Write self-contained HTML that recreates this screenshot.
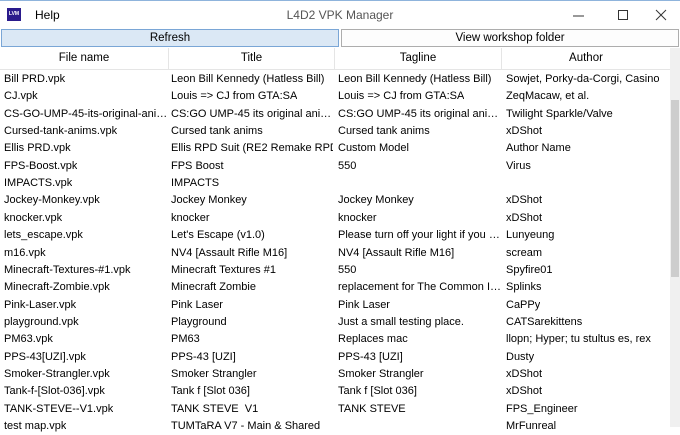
<!DOCTYPE html>
<html><head><meta charset="utf-8"><style>
*{margin:0;padding:0;box-sizing:border-box}
body{width:680px;height:427px;overflow:hidden;background:#fff;font-family:"Liberation Sans","Noto Sans CJK SC",sans-serif;font-size:11px;color:#000;position:relative}
.tb{position:absolute;left:0;top:0;width:680px;height:28px;background:#fff;border-top:1px solid #8fb4dc}
.logo{position:absolute;left:7px;top:7px;width:14px;height:13px;background:#2a1a8c;color:#fff;font-size:5px;font-weight:bold;line-height:13px;text-align:center}
.help{position:absolute;left:35px;top:7px;font-size:12px}
.title{position:absolute;left:0;width:680px;top:7px;text-align:center;color:#555;font-size:12px}
.btn{position:absolute;top:29px;height:18px;line-height:16px;text-align:center;font-size:11.5px;border:1px solid #adadad}
.hdr{position:absolute;top:48px;left:0;width:670px;height:22px;border-bottom:1px solid #e5e5e5;font-size:11.5px}
.hdr div{position:absolute;top:0;height:21px;line-height:21px;text-align:center;border-right:1px solid #e5e5e5}
.row{position:absolute;left:0;width:670px;height:17.35px;line-height:17px;white-space:nowrap}
.row span{position:absolute;top:0;overflow:hidden}
.sb{position:absolute;left:670px;top:48px;width:10px;height:379px;background:#f0f0f0}
.th{position:absolute;left:671px;top:100px;width:8px;height:177px;background:#cdcdcd}
</style></head><body>
<div class="tb">
<div class="logo">LVM</div>
<div class="help">Help</div>
<div class="title">L4D2 VPK Manager</div>
<svg style="position:absolute;left:570px;top:8px" width="100" height="14">
<line x1="3" y1="7" x2="14" y2="7" stroke="#333" stroke-width="1"/>
<rect x="48.5" y="1.5" width="9" height="9" fill="none" stroke="#333"/>
<line x1="86" y1="1" x2="96" y2="11" stroke="#333"/><line x1="96" y1="1" x2="86" y2="11" stroke="#333"/>
</svg>
</div>
<div class="btn" style="left:1px;width:338px;background:#dbe8f5;border-color:#7aa6d6">Refresh</div>
<div class="btn" style="left:341px;width:338px;background:#fdfdfd">View workshop folder</div>
<div class="hdr">
<div style="left:0;width:169px">File name</div>
<div style="left:169px;width:166px">Title</div>
<div style="left:335px;width:167px">Tagline</div>
<div style="left:502px;width:168px;border-right:none">Author</div>
</div>
<div class="sb"></div><div class="th"></div>
<div style="position:absolute;left:0;top:71px">
<div class="row" style="top:0"><span style="left:4px;width:162px">Bill PRD.vpk</span><span style="left:171px;width:162px">Leon Bill Kennedy (Hatless Bill)</span><span style="left:338px;width:162px">Leon Bill Kennedy (Hatless Bill)</span><span style="left:506px;width:162px">Sowjet, Porky-da-Corgi, Casino</span></div>
<div class="row" style="top:17.35px"><span style="left:4px">CJ.vpk</span><span style="left:171px">Louis =&gt; CJ from GTA:SA</span><span style="left:338px">Louis =&gt; CJ from GTA:SA</span><span style="left:506px">ZeqMacaw, et al.</span></div>
<div class="row" style="top:34.7px"><span style="left:4px;width:162px">CS-GO-UMP-45-its-original-ani…</span><span style="left:171px;width:162px">CS:GO UMP-45 its original ani…</span><span style="left:338px;width:162px">CS:GO UMP-45 its original ani…</span><span style="left:506px">Twilight Sparkle/Valve</span></div>
<div class="row" style="top:52.05px"><span style="left:4px">Cursed-tank-anims.vpk</span><span style="left:171px">Cursed tank anims</span><span style="left:338px">Cursed tank anims</span><span style="left:506px">xDShot</span></div>
<div class="row" style="top:69.4px"><span style="left:4px">Ellis PRD.vpk</span><span style="left:171px;width:162px">Ellis RPD Suit (RE2 Remake RPD…</span><span style="left:338px">Custom Model</span><span style="left:506px">Author Name</span></div>
<div class="row" style="top:86.75px"><span style="left:4px">FPS-Boost.vpk</span><span style="left:171px">FPS Boost</span><span style="left:338px">550</span><span style="left:506px">Virus</span></div>
<div class="row" style="top:104.1px"><span style="left:4px">IMPACTS.vpk</span><span style="left:171px">IMPACTS</span></div>
<div class="row" style="top:121.45px"><span style="left:4px">Jockey-Monkey.vpk</span><span style="left:171px">Jockey Monkey</span><span style="left:338px">Jockey Monkey</span><span style="left:506px">xDShot</span></div>
<div class="row" style="top:138.8px"><span style="left:4px">knocker.vpk</span><span style="left:171px">knocker</span><span style="left:338px">knocker</span><span style="left:506px">xDShot</span></div>
<div class="row" style="top:156.15px"><span style="left:4px">lets_escape.vpk</span><span style="left:171px">Let's Escape (v1.0)</span><span style="left:338px;width:162px">Please turn off your light if you …</span><span style="left:506px">Lunyeung</span></div>
<div class="row" style="top:173.5px"><span style="left:4px">m16.vpk</span><span style="left:171px">NV4 [Assault Rifle M16]</span><span style="left:338px">NV4 [Assault Rifle M16]</span><span style="left:506px">scream</span></div>
<div class="row" style="top:190.85px"><span style="left:4px">Minecraft-Textures-#1.vpk</span><span style="left:171px">Minecraft Textures #1</span><span style="left:338px">550</span><span style="left:506px">Spyfire01</span></div>
<div class="row" style="top:208.2px"><span style="left:4px">Minecraft-Zombie.vpk</span><span style="left:171px">Minecraft Zombie</span><span style="left:338px;width:162px">replacement for The Common I…</span><span style="left:506px">Splinks</span></div>
<div class="row" style="top:225.55px"><span style="left:4px">Pink-Laser.vpk</span><span style="left:171px">Pink Laser</span><span style="left:338px">Pink Laser</span><span style="left:506px">CaPPy</span></div>
<div class="row" style="top:242.9px"><span style="left:4px">playground.vpk</span><span style="left:171px">Playground</span><span style="left:338px">Just a small testing place.</span><span style="left:506px">CATSarekittens</span></div>
<div class="row" style="top:260.25px"><span style="left:4px">PM63.vpk</span><span style="left:171px">PM63</span><span style="left:338px">Replaces mac</span><span style="left:506px;width:162px">llopn; Hyper; tu stultus es, rex</span></div>
<div class="row" style="top:277.6px"><span style="left:4px">PPS-43[UZI].vpk</span><span style="left:171px">PPS-43 [UZI]</span><span style="left:338px">PPS-43 [UZI]</span><span style="left:506px">Dusty</span></div>
<div class="row" style="top:294.95px"><span style="left:4px">Smoker-Strangler.vpk</span><span style="left:171px">Smoker Strangler</span><span style="left:338px">Smoker Strangler</span><span style="left:506px">xDShot</span></div>
<div class="row" style="top:312.3px"><span style="left:4px">Tank-f-[Slot-036].vpk</span><span style="left:171px">Tank f [Slot 036]</span><span style="left:338px">Tank f [Slot 036]</span><span style="left:506px">xDShot</span></div>
<div class="row" style="top:329.65px"><span style="left:4px">TANK-STEVE--V1.vpk</span><span style="left:171px">TANK STEVE&nbsp; V1</span><span style="left:338px">TANK STEVE</span><span style="left:506px">FPS_Engineer</span></div>
<div class="row" style="top:347px"><span style="left:4px">test map.vpk</span><span style="left:171px">TUMTaRA V7 - Main &amp; Shared</span><span style="left:506px">MrFunreal</span></div>
</div>
</body></html>
